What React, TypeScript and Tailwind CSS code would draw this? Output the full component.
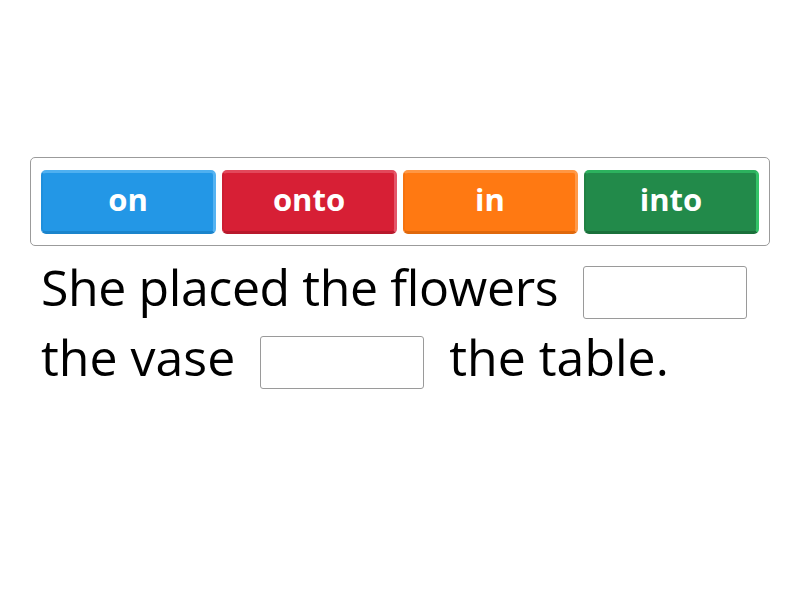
const words = [
  { label: "on", cls: "bg-[#2397e6] border-t-[#4fb0f0] border-r-[#55b3f2] border-b-[#1a84cc] border-l-[#1f8fdc]" },
  { label: "onto", cls: "bg-[#d71f35] border-t-[#e2485b] border-r-[#e4566a] border-b-[#b8192c] border-l-[#cc1d32]" },
  { label: "in", cls: "bg-[#ff7912] border-t-[#ff9744] border-r-[#ff9a4a] border-b-[#e0680b] border-l-[#f5730f]" },
  { label: "into", cls: "bg-[#228a4a] border-t-[#2cb25e] border-r-[#33c468] border-b-[#1a713b] border-l-[#208244]" },
];

function Blank() {
  return (
    <span className="mx-[12px] inline-block h-[53px] w-[164px] rounded-[3px] border border-[#9a9a9a] bg-white align-middle" />
  );
}

export default function App() {
  return (
    <div
      className="min-h-[600px] w-[800px] bg-white px-[30px] pt-[157px]"
      style={{ fontFamily: '"Open Sans", sans-serif' }}
    >
      <div className="flex gap-[6px] rounded-[5px] border border-[#9b9b9b] px-[10px] pt-[12px] pb-[11px]">
        {words.map((w) => (
          <div
            key={w.label}
            className={`flex h-[64px] flex-1 items-center justify-center rounded-[5px] border-t-[3px] border-r-[3px] border-b-[3px] border-l-[2px] pb-[5px] text-[31px] font-bold text-white ${w.cls}`}
          >
            {w.label}
          </div>
        ))}
      </div>
      <p className="mt-[6px] pl-[11px] text-[50px] leading-[70px] text-black">
        <span className="tracking-[-0.4px]">She placed the flowers</span>{" "}
        <Blank />{" "}
        the vase{" "}
        <Blank />{" "}
        the table.
      </p>
    </div>
  );
}
